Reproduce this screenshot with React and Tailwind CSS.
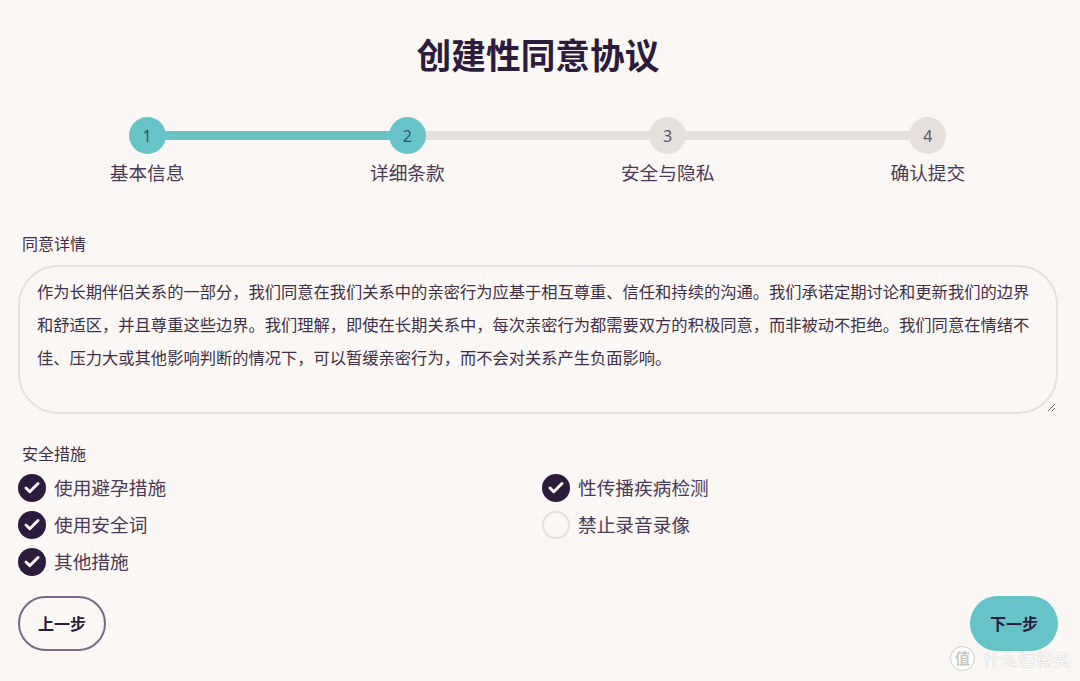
import React from 'react';
import { Check } from 'lucide-react';

const font = { fontFamily: '"Noto Sans", "Noto Sans CJK SC", sans-serif' };

const steps = [
  { id: 1, label: '基本信息', active: true, line: true },
  { id: 2, label: '详细条款', active: true, line: false },
  { id: 3, label: '安全与隐私', active: false, line: false },
  { id: 4, label: '确认提交', active: false, line: null },
];

const measures = [
  { label: '使用避孕措施', checked: true },
  { label: '性传播疾病检测', checked: true },
  { label: '使用安全词', checked: true },
  { label: '禁止录音录像', checked: false },
  { label: '其他措施', checked: true },
];

const details =
  '作为长期伴侣关系的一部分，我们同意在我们关系中的亲密行为应基于相互尊重、信任和持续的沟通。我们承诺定期讨论和更新我们的边界和舒适区，并且尊重这些边界。我们理解，即使在长期关系中，每次亲密行为都需要双方的积极同意，而非被动不拒绝。我们同意在情绪不佳、压力大或其他影响判断的情况下，可以暂缓亲密行为，而不会对关系产生负面影响。';

const App = () => {
  return (
    <div style={font} className="relative h-[681px] w-[1080px] overflow-hidden bg-[#fbf7f4] text-[#2d1b3d] pl-[18px] pr-[22px]">
      <h1 className="pt-[30px] text-center text-[34.7px] font-bold leading-[52px]">创建性同意协议</h1>

      <div className="-ml-px mt-[35px] grid grid-cols-4">
        {steps.map((step) => (
          <div key={step.id} className="relative flex flex-col items-center">
            {step.line !== null && (
              <div className={`absolute left-1/2 top-[14px] h-[9px] w-full ${step.line ? 'bg-[#66c4c8]' : 'bg-[#e5e0dc]'}`}></div>
            )}
            <div className={`relative flex h-[37px] w-[37px] items-center justify-center rounded-full text-base ${step.active ? 'bg-[#66c4c8] text-[#2f5560]' : 'bg-[#e5e0dc] text-[#5f5368]'}`}>
              {step.id}
            </div>
            <span className="mt-[6px] text-[18.7px] leading-[26px] text-[#4a3a58]">{step.label}</span>
          </div>
        ))}
      </div>

      <label className="mt-[46px] block pl-1 text-[16px] leading-[24px] text-[#3f3049]">同意详情</label>
      <textarea
        readOnly
        defaultValue={details}
        className="mt-[9px] block h-[149px] w-[1040px] rounded-[40px] border-2 border-[#e5e0dc] bg-transparent pl-[17px] pr-[20px] pt-[9px] text-[16.28px] leading-[33px] text-[#3f3049] outline-none"
      />

      <label className="mt-[28px] block pl-1 text-[16px] leading-[24px] text-[#3f3049]">安全措施</label>
      <div className="mt-[8px] grid grid-cols-2 gap-x-2 gap-y-[9px]">
        {measures.map((m) => (
          <div key={m.label} className="flex h-[28px] items-center gap-[8px]">
            {m.checked ? (
              <span className="flex h-[28px] w-[28px] items-center justify-center rounded-full bg-[#2d1b3d]">
                <Check size={18} strokeWidth={4} className="text-[#fbf7f4]" />
              </span>
            ) : (
              <span className="h-[28px] w-[28px] rounded-full border-2 border-[#e5e0dc]"></span>
            )}
            <span className="text-[18.7px] text-[#4a3a58]">{m.label}</span>
          </div>
        ))}
      </div>

      <div className="mt-[20px] flex justify-between">
        <button className="h-[55px] w-[88px] rounded-[28px] border-2 border-[#7a6a86] text-[16px] font-bold">上一步</button>
        <button className="h-[55px] w-[88px] rounded-[28px] bg-[#66c4c8] text-[16px] font-bold">下一步</button>
      </div>

      {/* watermark */}
      <div className="absolute bottom-[10px] left-[950px] flex items-center gap-[8px]">
        <span className="flex h-[25px] w-[25px] items-center justify-center rounded-full border border-[#d0cdcb] bg-white text-[15px] font-bold text-[#c9c6c4]">值</span>
        <span className="text-[17.6px] leading-[24px] text-white [text-shadow:0_0_1px_#a8a5a3]">什么值得买</span>
      </div>
    </div>
  );
};

export default App;
